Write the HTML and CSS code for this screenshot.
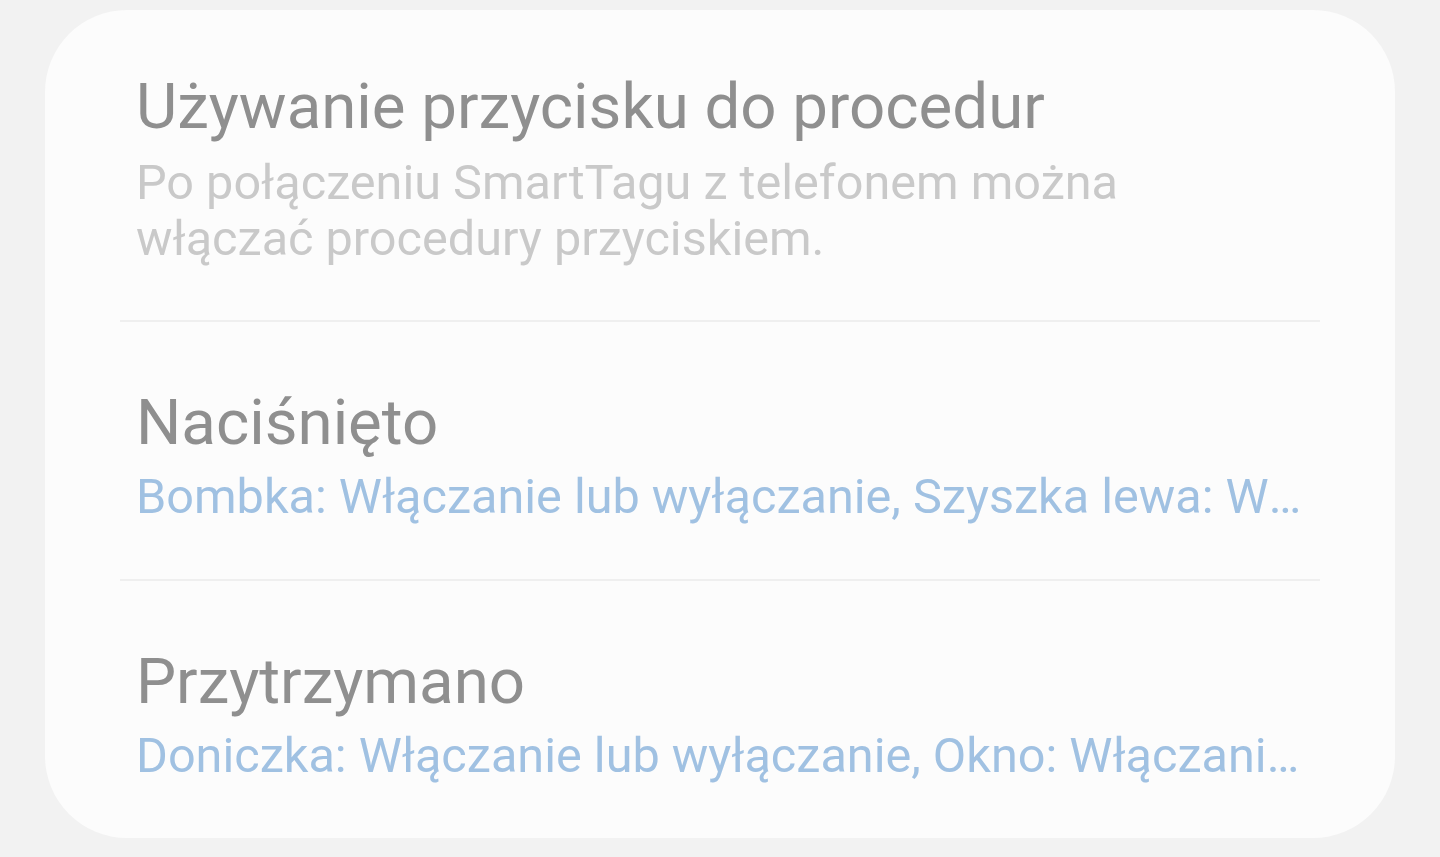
FILE: index.html
```html
<!DOCTYPE html>
<html lang="pl">
<head>
    <meta charset="UTF-8">
    <meta name="viewport" content="width=device-width, initial-scale=1.0">
    <title>Przycisk procedur</title>
    <link rel="stylesheet" href="styles.css">
</head>
<body>

    <div class="card">
        <!-- Intro -->
        <div class="item item-intro">
            <div class="item-title">Używanie przycisku do procedur</div>
            <div class="item-desc">Po połączeniu SmartTagu z telefonem można włączać procedury przyciskiem.</div>
        </div>

        <div class="divider"></div>

        <div class="item">
            <div class="item-title">Naciśnięto</div>
            <div class="item-value">Bombka: Włączanie lub wyłączanie, Szyszka lewa: Włączanie lub wyłączanie</div>
        </div>

        <div class="divider"></div>

        <div class="item">
            <div class="item-title">Przytrzymano</div>
            <div class="item-value">Doniczka: Włączanie lub wyłączanie, Okno: Włączanie lub wyłączanie</div>
        </div>
    </div>

</body>
</html>
```

FILE: styles.css
```css
body {
    margin: 0;
    background-color: #f2f2f2;
    font-family: Roboto, "Noto Sans", sans-serif;
}
.card {
    margin: 10px 0 0 45px;
    width: 1350px;
    height: 828px;
    box-sizing: border-box;
    background-color: #fcfcfc;
    border-radius: 82px;
    padding: 0 75px;
}
.item { padding: 63px 15px 50px 16px; }
.item-intro { padding-top: 59px; padding-bottom: 53px; }
.item-title {
    font-size: 63.6px;
    line-height: 76px;
    color: #8f8f8f;
}
.item-desc {
    margin-top: 10px;
    width: 1010px;
    font-size: 48.6px;
    line-height: 56px;
    color: #c9c9c9;
}
.item-value {
    margin-top: 4px;
    font-size: 48.6px;
    line-height: 64px;
    color: #a0c1e2;
    white-space: nowrap;
    overflow: hidden;
    text-overflow: ellipsis;
}
.divider {
    height: 2px;
    background-color: #efefef;
}
```
